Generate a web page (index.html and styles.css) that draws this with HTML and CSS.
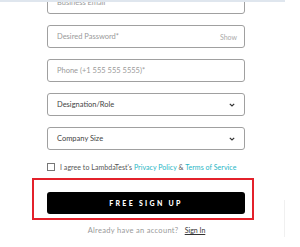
FILE: index.html
```html
<!DOCTYPE html>
<html>
<head>
<meta charset="utf-8">
<link rel="stylesheet" href="styles.css">
</head>
<body>
<div class="topline"></div>
<div class="sideline"></div>
<form class="form">
  <div class="field"><span class="ph">Business Email*</span></div>
  <div class="field"><span class="ph">Desired Password*</span><span class="show">Show</span></div>
  <div class="field"><span class="ph">Phone (+1 555 555 5555)*</span></div>
  <div class="field select"><span class="val">Designation/Role</span>
    <svg class="chev" width="6" height="4" viewBox="0 0 6 4"><path d="M0.8 0.8 L3 3 L5.2 0.8" fill="none" stroke="#333" stroke-width="1.2"/></svg></div>
  <div class="field select"><span class="val">Company Size</span>
    <svg class="chev" width="6" height="4" viewBox="0 0 6 4"><path d="M0.8 0.8 L3 3 L5.2 0.8" fill="none" stroke="#333" stroke-width="1.2"/></svg></div>
  <div class="agree"><span class="box"></span><span>I agree to LambdaTest's <a class="link">Privacy Policy</a> &amp; <a class="link">Terms of Service</a></span></div>
  <div class="btnwrap">
    <div class="highlight"></div>
    <div class="btn">FREE SIGN UP</div>
  </div>
  <div class="signin">Already have an account? <a class="sign">Sign In</a></div>
</form>
</body>
</html>
```
FILE: styles.css
```css
html, body { margin: 0; padding: 0; background: #fff; }
body { width: 300px; height: 247px; overflow: hidden; position: relative; font-family: "Lato", "Open Sans", sans-serif; }
.topline { position: absolute; left: 0; top: 0; width: 285px; height: 2px; background: #dfe6ee; }
.sideline { position: absolute; left: 284px; top: 200px; width: 1px; height: 37px; background: #f0f0f0; }
.form { margin: -9px 0 0 47px; width: 198px; display: flex; flex-direction: column; }
.field { box-sizing: border-box; height: 23px; border: 1px solid #a0a0a0; border-radius: 3px; display: flex; align-items: center; padding: 0 7px 0 9px; margin-bottom: 11px; font-size: 7.5px; }
.ph { color: #9a9a9a; flex: 1; }
.show { color: #aaa; font-size: 7px; }
.val { color: #444; flex: 1; }
.select { padding-right: 9px; }
.agree { margin-top: 2px; display: flex; align-items: center; font-size: 7px; letter-spacing: 0.05px; color: #555; height: 8px; }
.box { width: 6px; height: 6px; border: 1px solid #777; margin-right: 5px; flex: none; }
.link { color: #27b6c5; }
.btnwrap { position: relative; margin-top: 21px; }
.highlight { position: absolute; left: -15px; top: -14px; width: 222px; height: 42px; border: 2px solid #e3212b; box-sizing: border-box; }
.btn { height: 22px; background: #000; border-radius: 3px; color: #fff; font-weight: 900; font-size: 7px; letter-spacing: 2.3px; display: flex; align-items: center; justify-content: center; }
.signin { margin-top: 12px; text-align: center; font-size: 7.5px; letter-spacing: 0.3px; color: #999; padding-left: 1px; }
.sign { color: #333; text-decoration: underline; margin-left: 4px; letter-spacing: 0; font-size: 7px; }
```
